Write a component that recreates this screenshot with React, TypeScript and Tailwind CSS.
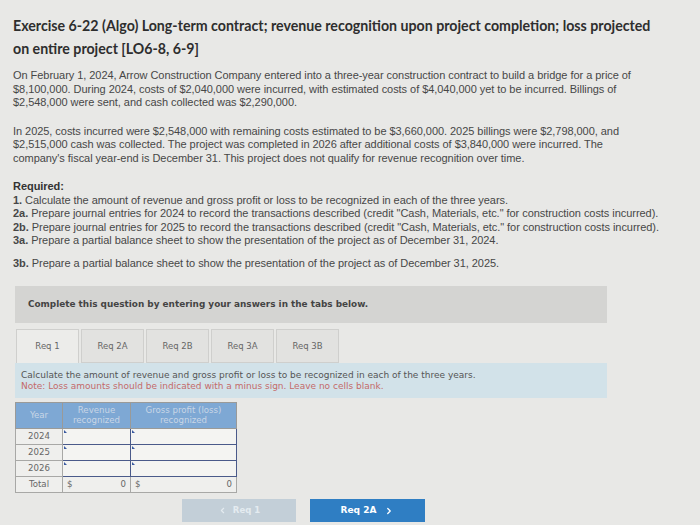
import React from 'react';
import { ChevronLeft, ChevronRight } from 'lucide-react';

const body = "font-['Liberation_Sans',Arial,sans-serif]";
const ui = "font-['DejaVu_Sans',Verdana,sans-serif]";

const tabs = ['Req 1', 'Req 2A', 'Req 2B', 'Req 3A', 'Req 3B'];
const years = ['2024', '2025', '2026'];

function InputCell() {
  return (
    <td className="relative h-[16px] border border-[#4a5a8a] bg-[#f4f4f2] p-0">
      <span className="absolute left-[1px] top-[1px] h-0 w-0 border-t-[3px] border-l-[3px] border-t-transparent border-l-[#3a5aa0]" />
    </td>
  );
}

export default function App() {
  return (
    <div className="h-[525px] w-[700px] overflow-hidden bg-[#e8e8e6] text-[#3a3a3a]">
      <div className="px-[13px] pt-[14px]">
        <h1 className="font-['Lato',sans-serif] text-[14.2px] font-bold leading-[23px] text-[#2e2e2e]">
          Exercise 6-22 (Algo) Long-term contract; revenue recognition upon project completion; loss projected
          <br />
          on entire project [LO6-8, 6-9]
        </h1>

        <div className={`${body} mt-[9px] text-[11px] leading-[13.5px] tracking-[-0.05px] text-[#474747]`}>
          <p>
            On February 1, 2024, Arrow Construction Company entered into a three-year construction contract to build a bridge for a price of
            <br />
            $8,100,000. During 2024, costs of $2,040,000 were incurred, with estimated costs of $4,040,000 yet to be incurred. Billings of
            <br />
            $2,548,000 were sent, and cash collected was $2,290,000.
          </p>
          <p className="mt-[15px]">
            In 2025, costs incurred were $2,548,000 with remaining costs estimated to be $3,660,000. 2025 billings were $2,798,000, and
            <br />
            $2,515,000 cash was collected. The project was completed in 2026 after additional costs of $3,840,000 were incurred. The
            <br />
            company's fiscal year-end is December 31. This project does not qualify for revenue recognition over time.
          </p>
          <div className="mt-[15px]">
            <p className="font-bold text-[#333]">Required:</p>
            <p>
              <b>1.</b> Calculate the amount of revenue and gross profit or loss to be recognized in each of the three years.
            </p>
            <p>
              <b>2a.</b> Prepare journal entries for 2024 to record the transactions described (credit "Cash, Materials, etc." for construction costs incurred).
            </p>
            <p>
              <b>2b.</b> Prepare journal entries for 2025 to record the transactions described (credit "Cash, Materials, etc." for construction costs incurred).
            </p>
            <p>
              <b>3a.</b> Prepare a partial balance sheet to show the presentation of the project as of December 31, 2024.
            </p>
            <p className="mt-[9px]">
              <b>3b.</b> Prepare a partial balance sheet to show the presentation of the project as of December 31, 2025.
            </p>
          </div>
        </div>
      </div>

      <div className={`${ui} ml-[15px] w-[592px]`}>
        <div className="mt-[16px] flex h-[37px] items-center bg-[#d4d4d2] pl-[13px] text-[8.9px] font-bold text-[#444]">
          Complete this question by entering your answers in the tabs below.
        </div>

        <div className="mt-[6px] flex gap-[2px] pl-[1px]">
          {tabs.map((t, i) => (
            <div
              key={t}
              className={`flex h-[34px] w-[63px] items-center justify-center border border-[#cfcfcd] text-[8.5px] text-[#666] ${
                i === 0 ? 'border-b-0 bg-[#ececea]' : 'bg-[#e2e2e0]'
              }`}
            >
              {t}
            </div>
          ))}
        </div>

        <div className="flex h-[35px] flex-col justify-center bg-[#d2e2e9] pl-[6px] text-[9px] leading-[10.5px]">
          <p className="text-[#555]">Calculate the amount of revenue and gross profit or loss to be recognized in each of the three years.</p>
          <p className="text-[#c46a6a]">Note: Loss amounts should be indicated with a minus sign. Leave no cells blank.</p>
        </div>

        <table className="mt-[4px] w-[222px] border-collapse text-[8.6px] text-[#666]">
          <thead>
            <tr className="h-[26px] bg-[#7ea8d4] text-center leading-[9.5px] text-[#c9d6e6]">
              <th className="w-[47px] border border-[#9a9a98] font-normal">Year</th>
              <th className="w-[68px] border border-[#9a9a98] font-normal">Revenue<br />recognized</th>
              <th className="border border-[#9a9a98] font-normal">Gross profit (loss)<br />recognized</th>
            </tr>
          </thead>
          <tbody>
            {years.map((y) => (
              <tr key={y}>
                <td className="h-[16px] border border-[#a8a8a6] bg-[#efefed] text-center">{y}</td>
                <InputCell />
                <InputCell />
              </tr>
            ))}
            <tr className="h-[16px] bg-[#efefed]">
              <td className="border border-[#a8a8a6] text-center">Total</td>
              <td className="border border-[#a8a8a6] px-[4px]">
                <div className="flex justify-between"><span>$</span><span>0</span></div>
              </td>
              <td className="border border-[#a8a8a6] px-[4px]">
                <div className="flex justify-between"><span>$</span><span>0</span></div>
              </td>
            </tr>
          </tbody>
        </table>

        <div className="mt-[6px] flex gap-[14px] pl-[167px]">
          <div className="flex h-[23px] w-[114px] items-center justify-center gap-[6px] bg-[#c3cfd8] text-[8.5px] font-bold text-[#e4ebf0]">
            <ChevronLeft size={9} strokeWidth={3} />
            <span>Req 1</span>
          </div>
          <div className="flex h-[23px] w-[115px] items-center justify-center gap-[8px] bg-[#2f7ec3] text-[9px] font-bold text-white">
            <span>Req 2A</span>
            <ChevronRight size={10} strokeWidth={3} />
          </div>
        </div>
      </div>
    </div>
  );
}
